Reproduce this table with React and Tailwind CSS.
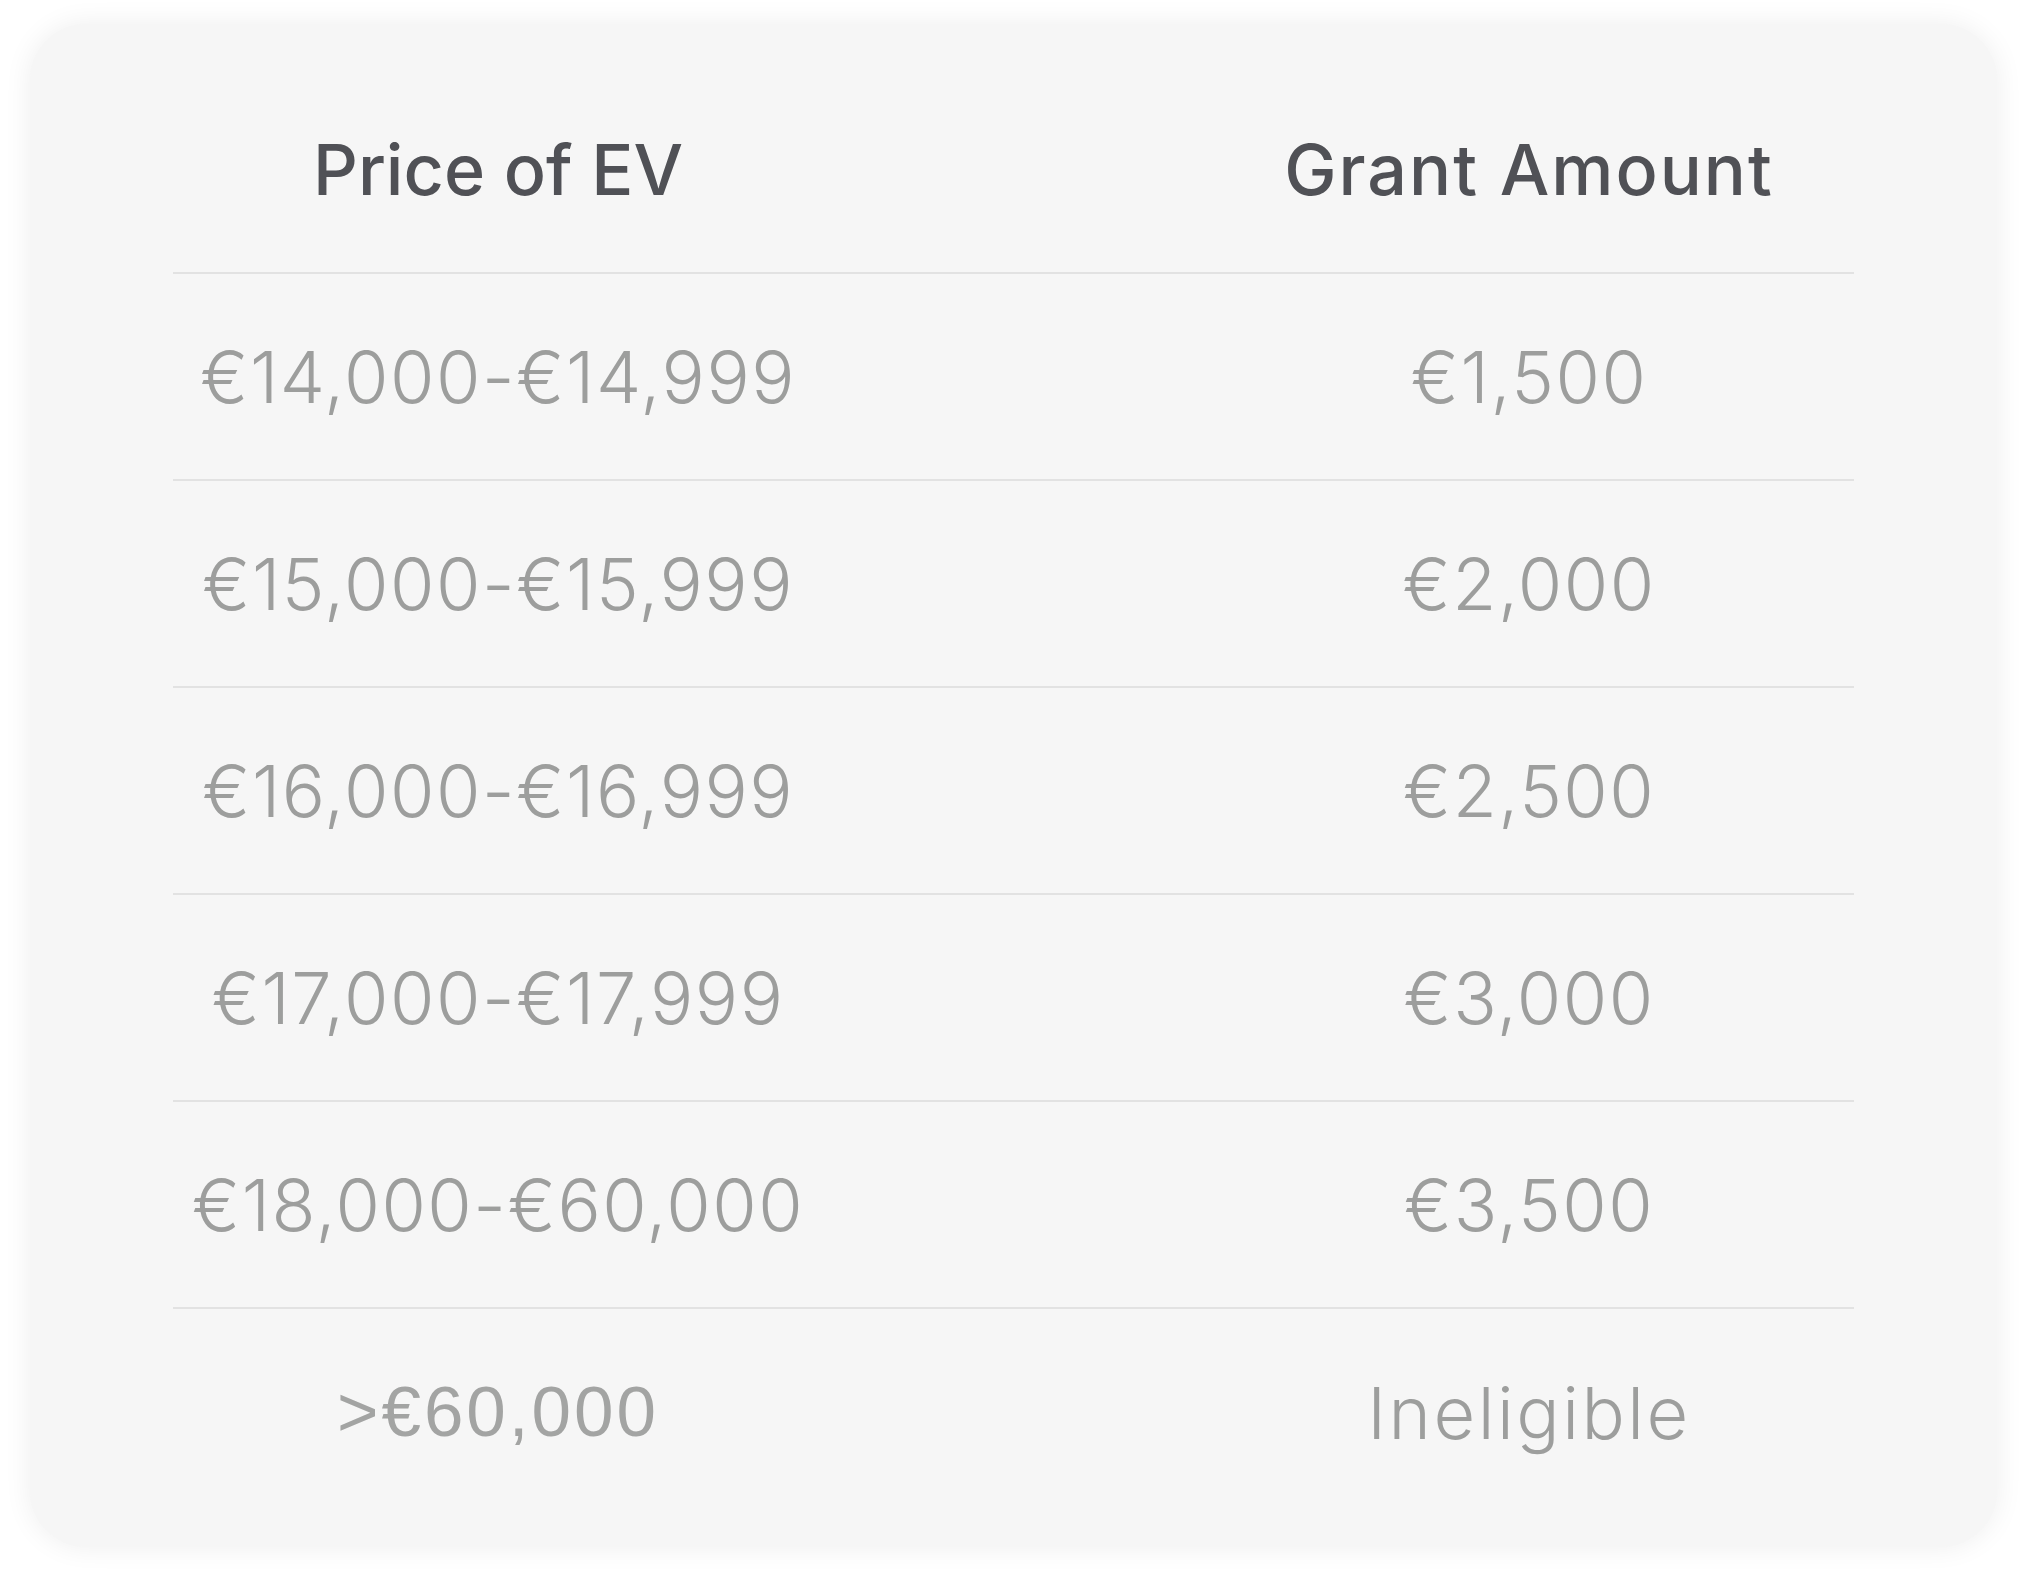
const ROWS = [
  { price: '€14,000-€14,999', grant: '€1,500' },
  { price: '€15,000-€15,999', grant: '€2,000' },
  { price: '€16,000-€16,999', grant: '€2,500' },
  { price: '€17,000-€17,999', grant: '€3,000' },
  { price: '€18,000-€60,000', grant: '€3,500' },
  { price: '>€60,000', grant: 'Ineligible', fallback: true },
]

const cellCls = 'w-[650px] flex items-center justify-center'

export default function App() {
  return (
    <div className="min-h-screen bg-white pt-[24px] pl-[30px]">
      <div className="w-[1967px] h-[1523px] rounded-[56px] bg-[#f6f6f6] shadow-[0_0_28px_rgba(0,0,0,0.07)] px-[143px] pt-[42px] font-['Inter',sans-serif]">
        {/* header */}
        <div className="h-[208px] flex justify-between border-b-2 border-[#e2e2e2] text-[70px] font-medium text-[#505156]">
          <div className={cellCls}>Price of EV</div>
          <div className={cellCls + ' tracking-[2px]'}>Grant Amount</div>
        </div>

        {ROWS.map((row, i) => (
          <div
            key={row.price}
            className={
              'h-[207px] flex justify-between text-[72px] font-light tracking-[1.5px] text-[#9d9e9d] ' +
              (i < ROWS.length - 1 ? 'border-b-2 border-[#e2e2e2]' : '')
            }
          >
            <div className={cellCls}>
              <span className={row.fallback ? "font-['Liberation_Sans',sans-serif] font-normal text-[71px] tracking-[3px] text-[#a3a4a3]" : ''}>
                {row.price}
              </span>
            </div>
            <div className={cellCls + (row.fallback ? ' tracking-[2.5px]' : '')}>{row.grant}</div>
          </div>
        ))}
      </div>
    </div>
  )
}
